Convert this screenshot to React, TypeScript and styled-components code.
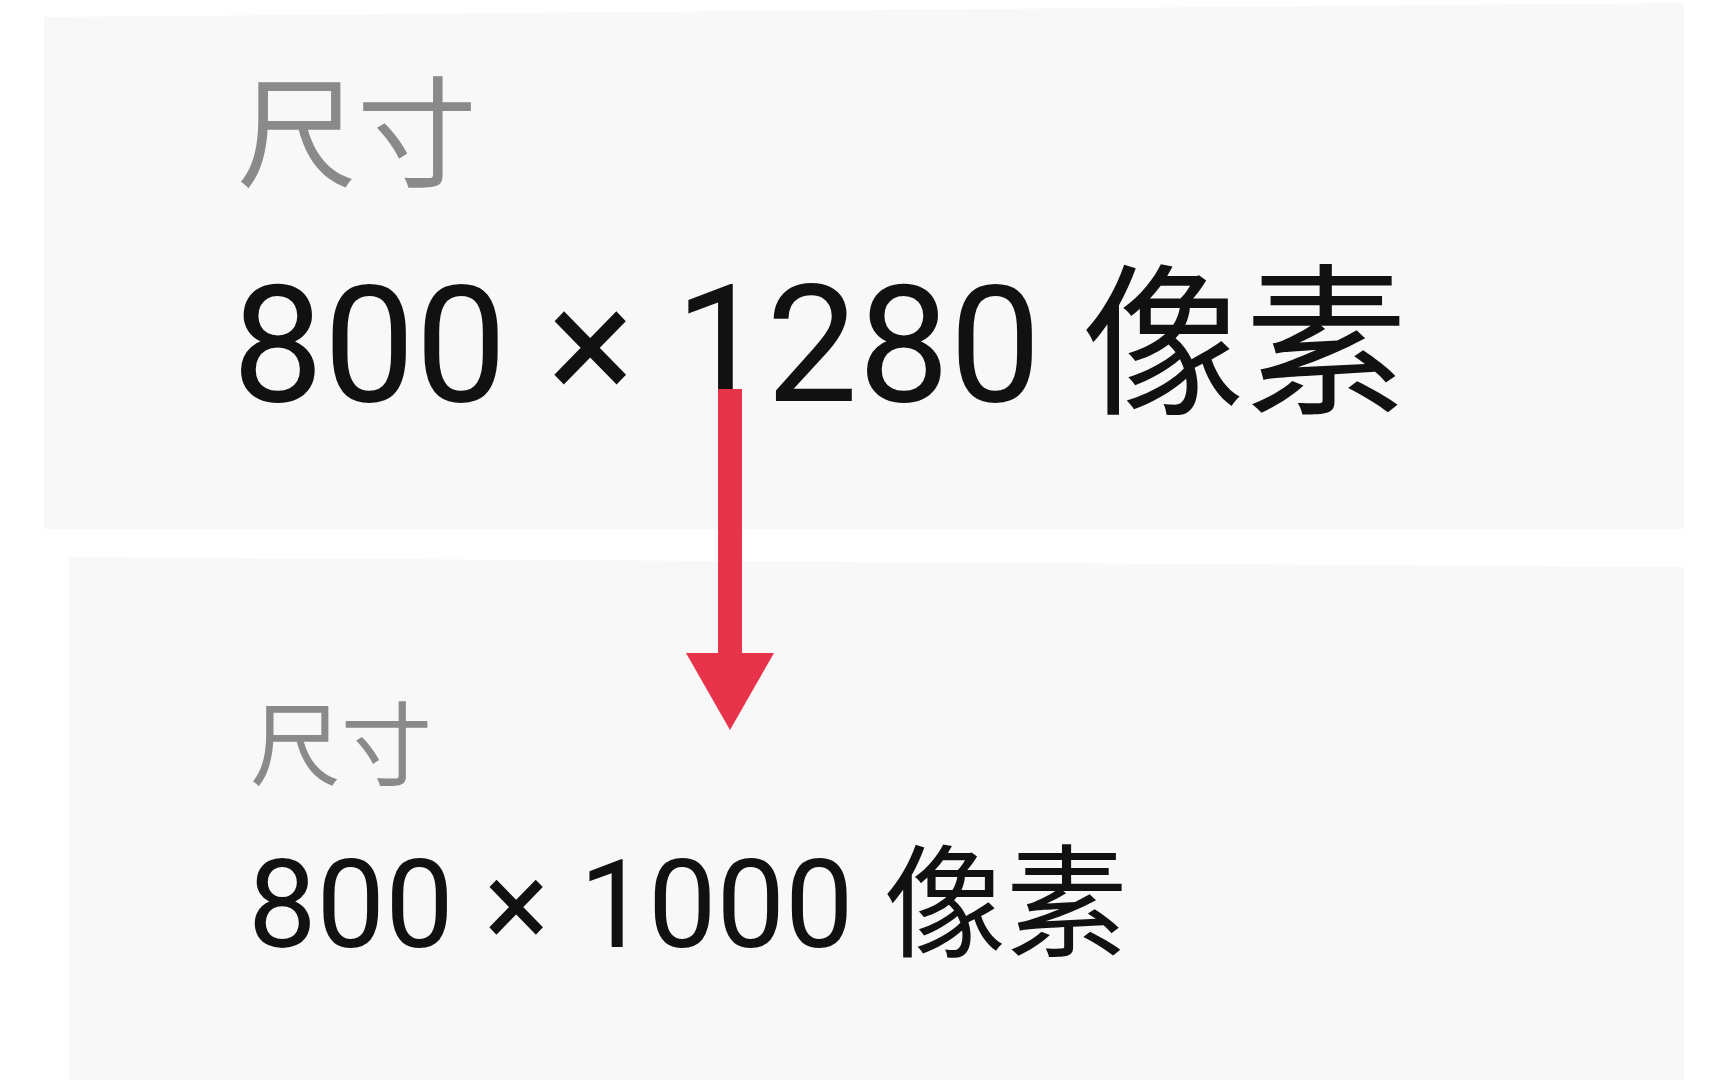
import styled, { createGlobalStyle } from "styled-components";

const GlobalStyle = createGlobalStyle`
  html, body {
    margin: 0;
    padding: 0;
    background: #ffffff;
  }
  body {
    font-family: Roboto, "Noto Sans CJK SC", sans-serif;
  }
`;

const Page = styled.div`
  position: relative;
  width: 1728px;
  height: 1080px;
  overflow: hidden;
  display: flex;
  flex-direction: column;
`;

const Card = styled.section<{ $left: number; $top: number; $tilt: string }>`
  margin-left: ${(p) => p.$left}px;
  margin-top: ${(p) => p.$top}px;
  width: ${(p) => 1684 - p.$left}px;
  background: #f8f8f8;
  display: flex;
  flex-direction: column;
  clip-path: ${(p) => p.$tilt};
`;

const TopCard = styled(Card)`
  height: 526px;
  padding: 63px 0 0 188px;
  box-sizing: border-box;
`;

const BottomCard = styled(Card)`
  flex: 1;
  padding: 136px 0 0 179px;
  box-sizing: border-box;
`;

const Label = styled.div<{ $size: number; $indent: number }>`
  font-family: "Noto Sans CJK SC", sans-serif;
  font-size: ${(p) => p.$size}px;
  line-height: 1;
  color: #8a8a8a;
  margin-left: ${(p) => p.$indent}px;
`;

const Value = styled.div<{ $size: number; $gap: number }>`
  font-family: Roboto, "Noto Sans CJK SC", sans-serif;
  font-size: ${(p) => p.$size}px;
  line-height: 1;
  color: #111111;
  margin-top: ${(p) => p.$gap}px;
  white-space: nowrap;
`;

const ArrowMark = styled.svg`
  position: absolute;
  left: 686px;
  top: 389px;
  width: 88px;
  height: 341px;
`;

function DownArrow() {
  return (
    <ArrowMark viewBox="0 0 88 341">
      <rect x="32" y="0" width="24" height="266" fill="#e8344a" />
      <polygon points="0,264 88,264 44,341" fill="#e8344a" />
    </ArrowMark>
  );
}

export default function App() {
  return (
    <>
      <GlobalStyle />
      <Page>
        <TopCard $left={44} $top={3} $tilt="polygon(0 14px, 100% 0, 100% 100%, 0 100%)">
          <Label $size={120} $indent={5}>尺寸</Label>
          <Value $size={163} $gap={78}>800 × 1280 像素</Value>
        </TopCard>
        <BottomCard $left={69} $top={28} $tilt="polygon(0 0, 100% 10px, 100% 100%, 0 100%)">
          <Label $size={91} $indent={2}>尺寸</Label>
          <Value $size={122} $gap={61}>800 × 1000 像素</Value>
        </BottomCard>
        <DownArrow />
      </Page>
    </>
  );
}
